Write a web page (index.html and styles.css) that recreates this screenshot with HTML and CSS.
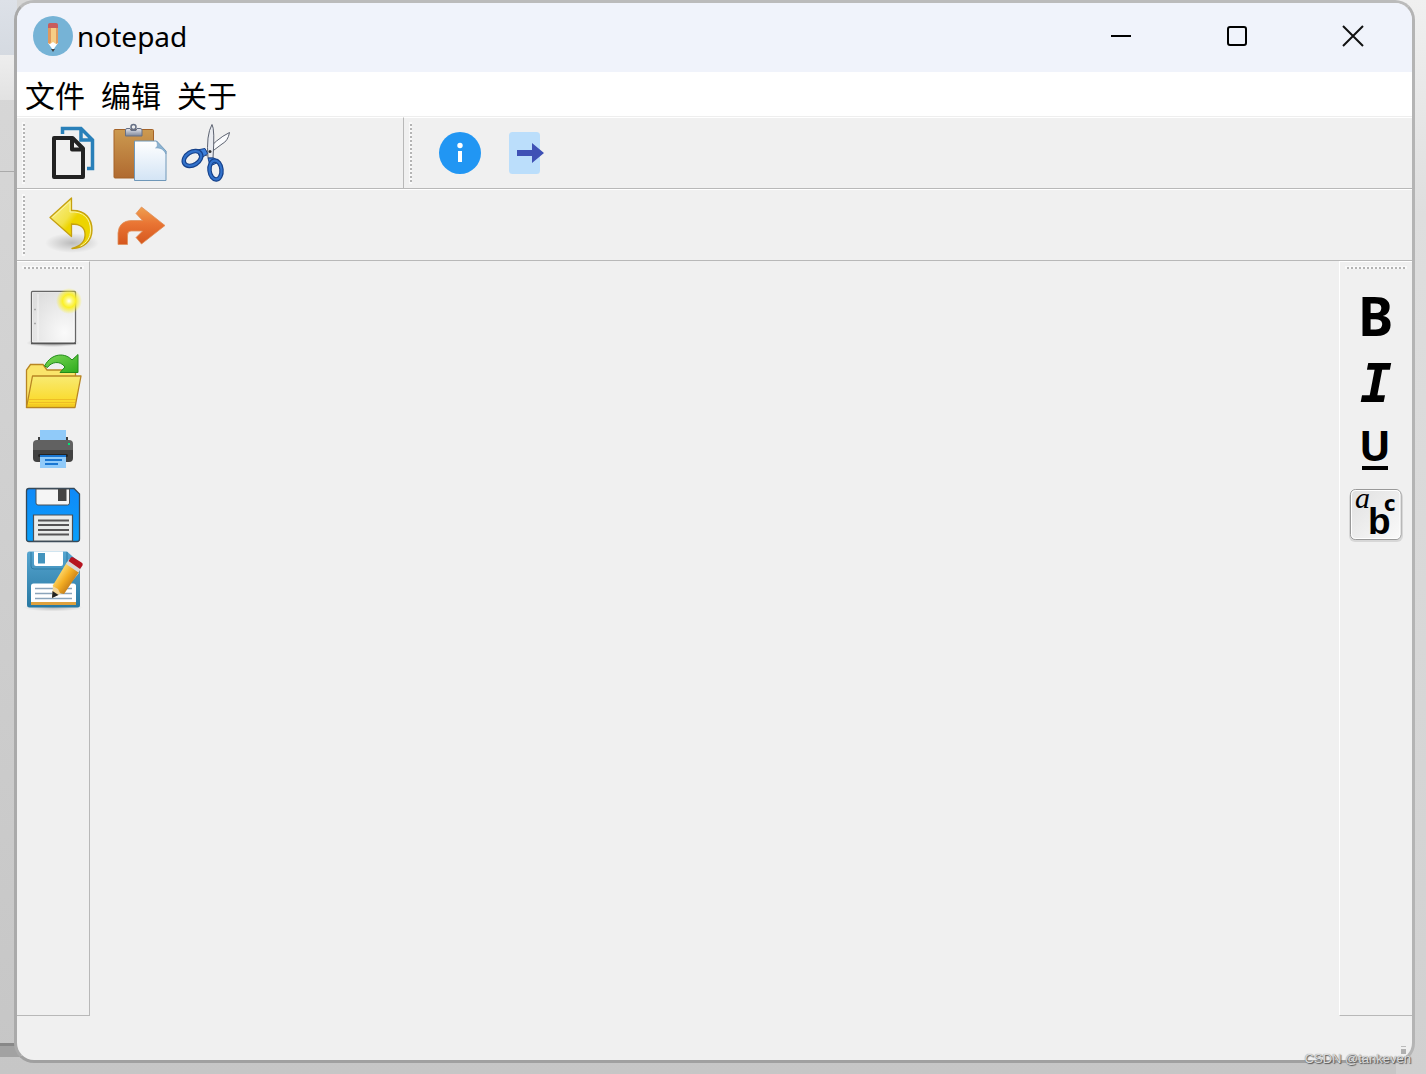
FILE: index.html
```html
<!DOCTYPE html>
<html lang="zh-CN">
<head>
    <meta charset="UTF-8">
    <meta name="viewport" content="width=device-width, initial-scale=1.0">
    <title>notepad</title>
    <link rel="stylesheet" href="styles.css">
</head>
<body>
    <div class="window">
        <header class="titlebar">
            <svg class="app-icon" viewBox="0 0 40 40">
                <circle cx="20" cy="20" r="20" fill="#76b3d6"/>
                <path d="M15 12h10v15l-5 7-5-7z" fill="#fff"/>
                <path d="M15 12h10v15l-2 1-3-2-3 2-2-1z" fill="#f6cd86"/>
                <path d="M15 12h3v14l-1 2-2-1zM23 12h2v15l-2 1z" fill="#e0995d"/>
                <path d="M15 9q0-2 2-2h6q2 0 2 2v3H15z" fill="#c85c5c"/>
                <path d="M18 33h4l-2 3z" fill="#444"/>
            </svg>
            <h1>notepad</h1>
            <div class="window-buttons">
                <button aria-label="Minimize"><svg viewBox="0 0 22 22"><path d="M1 11h20" stroke="#000" stroke-width="2"/></svg></button>
                <button aria-label="Maximize"><svg viewBox="0 0 22 22"><rect x="2" y="2" width="18" height="18" rx="2" fill="none" stroke="#000" stroke-width="2"/></svg></button>
                <button aria-label="Close"><svg viewBox="0 0 22 22"><path d="M1 1l20 20M21 1L1 21" stroke="#111" stroke-width="2"/></svg></button>
            </div>
        </header>

        <nav class="menubar">
            <button>文件</button>
            <button>编辑</button>
            <button>关于</button>
        </nav>

        <div class="toolbar-row">
            <div class="toolbar toolbar-edit">
                <span class="handle"></span>
                <button class="tool" aria-label="Copy">
                    <svg viewBox="0 0 66 66">
                        <path d="M22.500 14V8.500H41L52.500 20v28.500H47M41 8v12h12" fill="none" stroke="#2980b9" stroke-width="3.500"/>
                        <path d="M14 18h18.500L43 28.500V57H14zM32 18v11.500h11" fill="none" stroke="#222" stroke-width="4" stroke-linejoin="round"/>
                    </svg>
                </button>
                <button class="tool" aria-label="Paste">
                    <svg viewBox="0 0 66 66">
                        <defs>
                            <linearGradient id="board" x2="0" y2="1"><stop stop-color="#cc9a50"/><stop offset="1" stop-color="#b06a30"/></linearGradient>
                            <linearGradient id="sheet" x2="0" y2="1"><stop stop-color="#fff"/><stop offset="1" stop-color="#d3e4f5"/></linearGradient>
                            <linearGradient id="metal" x2="0" y2="1"><stop stop-color="#e6e8ef"/><stop offset="1" stop-color="#7d8698"/></linearGradient>
                        </defs>
                        <rect x="8" y="9.500" width="39.500" height="48.500" rx="1" fill="url(#board)" stroke="#a56328"/>
                        <circle cx="27.500" cy="7" r="2.500" fill="#eee" stroke="#667085" stroke-width="1.500"/>
                        <path d="M19.500 10q0-1.500 1.500-1.500h3l1 2h5l1-2h3q2 0 2 1.500v6h-16.500z" fill="url(#metal)" stroke="#667085"/>
                        <path d="M28.500 21h22L60 31v29.500H28.500z" fill="url(#sheet)" stroke="#6f97b8"/>
                        <path d="M50.500 21q2 6-1 7 7-1 10.500 6V31z" fill="#8db4d2" stroke="#6f97b8" stroke-width=".5"/>
                    </svg>
                </button>
                <button class="tool" aria-label="Cut">
                    <svg viewBox="0 0 66 66">
                        <path d="M32 34Q44 19 57.500 12.500 56 21 50 24L34 36z" fill="#fafbfd" stroke="#5c6270"/>
                        <path d="M36 38Q34 15 40 4.500 43 9 41 38z" fill="#e9ebf0" stroke="#5c6270"/>
                        <path d="M25 30l8-1.500 2.500 5-7 5.500zM36 38h6l5 4-9 4z" fill="#3d80dc" stroke="#16418a"/>
                        <g fill="none" stroke="#16418a" stroke-width="4.500">
                            <ellipse cx="20.500" cy="38.500" rx="9.500" ry="6.500" transform="rotate(-32 20.500 38.500)"/>
                            <ellipse cx="43.500" cy="50" rx="6" ry="9.500" transform="rotate(-6 43.500 50)"/>
                        </g>
                        <g fill="none" stroke="#3272cb" stroke-width="2.200">
                            <ellipse cx="20.500" cy="38.500" rx="9.500" ry="6.500" transform="rotate(-32 20.500 38.500)"/>
                            <ellipse cx="43.500" cy="50" rx="6" ry="9.500" transform="rotate(-6 43.500 50)"/>
                        </g>
                        <circle cx="38" cy="31.500" r="1.500" fill="#333"/>
                    </svg>
                </button>
            </div>
            <div class="toolbar toolbar-help">
                <span class="handle"></span>
                <button class="tool" aria-label="About">
                    <svg viewBox="0 0 66 66">
                        <circle cx="33" cy="33" r="21" fill="#2196f3"/>
                        <circle cx="33" cy="25.500" r="2.700" fill="#fff"/>
                        <path d="M31 31h4v11h-4z" fill="#fff"/>
                    </svg>
                </button>
                <button class="tool" aria-label="Exit">
                    <svg viewBox="0 0 66 66">
                        <rect x="16" y="12" width="31" height="42" rx="3.500" fill="#bbdefb"/>
                        <path d="M24 30h15v-7l12 10-12 10v-7H24z" fill="#3f51b5"/>
                    </svg>
                </button>
            </div>
        </div>

        <div class="toolbar-row">
            <div class="toolbar toolbar-history">
                <span class="handle"></span>
                <button class="tool" aria-label="Undo">
                    <svg viewBox="0 0 66 66">
                        <defs>
                            <radialGradient id="shade"><stop stop-color="#000" stop-opacity=".22"/><stop offset="1" stop-color="#000" stop-opacity="0"/></radialGradient>
                            <linearGradient id="yellow" x2="1" y2="1"><stop stop-color="#fbf3a0"/><stop offset=".4" stop-color="#f2e248"/><stop offset=".5" stop-color="#edd400"/></linearGradient>
                        </defs>
                        <ellipse cx="32" cy="51" rx="27" ry="10" fill="url(#shade)"/>
                        <path d="M10 25.500L31.500 6v12.500C46 18 52 27 52 38c0 11-8 18-20 18.500C41 54 45.500 50 45 42c0-7-6-10-13.500-10v12.500z" fill="url(#yellow)" stroke="#c5a010" stroke-width="1.300" stroke-linejoin="round"/>
                        <path d="M12.500 25.500L30 9.500V20c14-1 20.500 7 20.500 18 0 8-4 13-10 16" fill="none" stroke="#fbf4a6" stroke-width="1"/>
                    </svg>
                </button>
                <button class="tool" aria-label="Redo">
                    <svg viewBox="0 0 66 66">
                        <defs><linearGradient id="orange" x2="0" y2="1"><stop stop-color="#efa050"/><stop offset=".45" stop-color="#e97433"/><stop offset="1" stop-color="#d5571e"/></linearGradient></defs>
                        <path d="M12 52.500V41q1-12 13-12.500h11.500L30 21.500l5.500-6.500L59 33.500 35.500 52 30 45.500l6.500-6.500H25q-3.500 0-3.500 4v9.500z" fill="url(#orange)" stroke="#e0905c" stroke-width=".8"/>
                    </svg>
                </button>
            </div>
        </div>

        <main class="workspace">
            <div class="side side-left">
                <span class="handle handle-top"></span>
                <button class="tool" aria-label="New">
                    <svg viewBox="0 0 66 66">
                        <defs>
                            <radialGradient id="page" cx=".75" cy=".8" r=".9"><stop stop-color="#fafafa"/><stop offset="1" stop-color="#dedede"/></radialGradient>
                            <radialGradient id="sun"><stop stop-color="#fff"/><stop offset=".25" stop-color="#fdf87a"/><stop offset=".5" stop-color="#fbf02a"/><stop offset="1" stop-color="#fbf02a" stop-opacity="0"/></radialGradient>
                        </defs>
                        <ellipse cx="33" cy="59" rx="27" ry="4" fill="url(#shade)"/>
                        <ellipse cx="33" cy="59" rx="27" ry="4" fill="url(#shade)"/>
                        <rect x="11.500" y="7.500" width="44" height="51.500" rx="1" fill="url(#page)" stroke="#666" stroke-width="1.300"/>
                        <path d="M11 59.500h45" stroke="#555" stroke-width="1.500"/>
                        <path d="M12.500 58V8.500H54V58z M18 10v47" fill="none" stroke="#fff" stroke-opacity=".6"/>
                        <path d="M14 25.500h2M14 39.500h2" stroke="#aaa" stroke-width="1.500"/>
                        <circle cx="49" cy="17" r="13" fill="url(#sun)"/>
                    </svg>
                </button>
                <button class="tool" aria-label="Open">
                    <svg viewBox="0 0 66 66">
                        <defs>
                            <linearGradient id="folder" x2="0" y2="1"><stop stop-color="#f8ea72"/><stop offset="1" stop-color="#fbd71c"/></linearGradient>
                            <linearGradient id="green" x2="1" y2="1"><stop stop-color="#7ed957"/><stop offset="1" stop-color="#2eab1d"/></linearGradient>
                        </defs>
                        <path d="M6.500 57V20l4-5.500H23l4 5.500h28.500v12L52 57z" fill="#fae46a" stroke="#b88523" stroke-width="1.300"/>
                        <path d="M12.500 26H61l-6 31.500H6.500z" fill="url(#folder)" stroke="#b88523" stroke-width="1.300" stroke-linejoin="round"/>
                        <path d="M9 49.500h47M9 52.500h46M8 55h46.500" stroke="#eebd25"/>
                        <path d="M24.500 16C32 2 46 3 52 10l6-5.500v18H40l5-5.500c-5-7-14-5-17.500.500z" fill="url(#green)" stroke="#218a19"/>
                    </svg>
                </button>
                <button class="tool" aria-label="Print">
                    <svg viewBox="0 0 66 66">
                        <path d="M18 21h30v5H18z" fill="#424242"/>
                        <path d="M20 14h26v12H20z" fill="#90caf9"/>
                        <path d="M13 33h40v9q0 4-4 4H17q-4 0-4-4z" fill="#424242"/>
                        <path d="M17 24h32q4 0 4 4v6H13v-6q0-4 4-4z" fill="#616161"/>
                        <rect x="18" y="38" width="30" height="3" rx="1.500" fill="#242424"/>
                        <path d="M20 39h26v13H20z" fill="#90caf9"/>
                        <path d="M20 39h26v2H20zM25 43h17v2H25zM25 47h13v2H25z" fill="#1976d2"/>
                        <path d="M48 27h2v2h-2z" fill="#00e676"/>
                    </svg>
                </button>
                <button class="tool" aria-label="Save">
                    <svg viewBox="0 0 66 66">
                        <defs><linearGradient id="disk" x2="0" y2="1"><stop stop-color="#1089f8"/><stop offset="1" stop-color="#08a0fb"/></linearGradient></defs>
                        <path d="M9 6.500h45l5.500 5.500v45q0 2.500-2.500 2.500H9q-2.500 0-2.500-2.500V9q0-2.500 2.500-2.500z" fill="url(#disk)" stroke="#34495a" stroke-width="1.300"/>
                        <path d="M16 7h33.500v14q0 2-2 2H18q-2 0-2-2z" fill="#f5f5f5" stroke="#4a5056"/>
                        <path d="M38 7h8.500v12H38z" fill="#444"/>
                        <path d="M13.500 59V33h39v26z" fill="#e9ecea" stroke="#4a5056" stroke-width="1.200"/>
                        <path d="M18 38.500h31M18 43h31M18 48h31M18 52.500h31" stroke="#555" stroke-width="1.800"/>
                    </svg>
                </button>
                <button class="tool" aria-label="Save as">
                    <svg viewBox="0 0 66 66">
                        <defs>
                            <linearGradient id="teal" x2="0" y2="1"><stop stop-color="#56a5d0"/><stop offset="1" stop-color="#2878a2"/></linearGradient>
                            <linearGradient id="pencil" gradientUnits="userSpaceOnUse" x1="38" y1="28" x2="50" y2="37"><stop stop-color="#fbd263"/><stop offset=".5" stop-color="#f3ad22"/><stop offset="1" stop-color="#cd851a"/></linearGradient>
                        </defs>
                        <ellipse cx="33" cy="59.500" rx="30" ry="4" fill="url(#shade)"/>
                        <path d="M9 3.500h38L60 15v42q0 2.500-2.500 2.500h-48Q7 59.500 7 57V6q0-2.500 2-2.500z" fill="url(#teal)"/>
                        <path d="M11 4v14q0 3 3 3h29q4 0 4-3V4" fill="none" stroke="#2d7ca5"/>
                        <path d="M14 3.500h29V16q0 2-2 2H16q-2 0-2-2z" fill="#fff"/>
                        <path d="M18 5h7v10.500h-7z" fill="#4394bd"/>
                        <path d="M11 57V38q0-2.500 2.500-2.500h40Q56 35.500 56 38v19z" fill="#fff"/>
                        <path d="M11 54h45v3H11z" fill="#dfa13d"/>
                        <path d="M15 40.500h37M15 45.500h37M15 50.500h37" stroke="#8ba4ba" stroke-width="1.500"/>
                        <path d="M32 50l1-12 15-20 11 7-17 20z" fill="#f3d494"/>
                        <path d="M32.500 38L47 14l12.500 9L44 46l-4-1-2-4z" fill="url(#pencil)"/>
                        <path d="M32 50l.5-7 6 4z" fill="#222"/>
                        <path d="M46 16l3-5 12.500 8.500-3 5z" fill="#d8d8d8"/>
                        <path d="M48.500 13l2-3q1-1.500 3-.5l8 5q2 1 1 3L60 21z" fill="#b51420"/>
                    </svg>
                </button>
            </div>

            <div class="canvas"></div>

            <div class="side side-right">
                <span class="handle handle-top"></span>
                <button class="tool" aria-label="Bold"><svg viewBox="0 0 66 66"><text class="letter" x="15" y="52">B</text></svg></button>
                <button class="tool" aria-label="Italic"><svg viewBox="0 0 66 66"><text class="letter letter-italic" x="17" y="52">I</text></svg></button>
                <button class="tool" aria-label="Underline">
                    <svg viewBox="0 0 66 66">
                        <text class="letter letter-underline" x="16" y="45">U</text>
                        <path d="M19 50h26v4H19z"/>
                    </svg>
                </button>
                <button class="tool" aria-label="Font">
                    <svg viewBox="0 0 66 66">
                        <defs><linearGradient id="key" x2="1" y2="1"><stop stop-color="#e0e0e0"/><stop offset="1" stop-color="#fafafa"/></linearGradient></defs>
                        <rect x="6" y="9" width="54" height="51" rx="6" fill="#000" opacity=".1"/>
                        <rect x="7.500" y="7.500" width="50.500" height="50" rx="5" fill="url(#key)" stroke="#999"/>
                        <rect x="8.500" y="8.500" width="48.500" height="48" rx="4" fill="none" stroke="#fff"/>
                        <text class="font-a" x="12" y="26">a</text>
                        <text class="font-b" x="25" y="52">b</text>
                        <text class="font-c" x="41" y="29">c</text>
                    </svg>
                </button>
            </div>
        </main>

        <footer class="statusbar">
            <span class="grip"></span>
        </footer>
    </div>
    <div class="watermark">CSDN @tankeven</div>
</body>
</html>
```
FILE: styles.css
```css
* {
    margin: 0;
    padding: 0;
    box-sizing: border-box;
}

body {
    position: relative;
    min-height: 100vh;
    display: flex;
    padding: 0 11px 11px 14px;
    font-family: "Noto Sans", "Noto Sans CJK SC", sans-serif;
    color: #000;
    /* desktop behind the window */
    background:
        linear-gradient(#dde1e8, #d5dae1) 0 0 / 17px 55px no-repeat,
        linear-gradient(#eee, #e2e2e2) 0 55px / 17px 45px no-repeat,
        linear-gradient(#aaa, #aaa) 0 171px / 17px 1px no-repeat,
        linear-gradient(#888, #888) 0 calc(100% - 28px) / 17px 3px no-repeat,
        linear-gradient(#a2a2a2, #a2a2a2) 0 calc(100% - 17px) / 24px 11px no-repeat,
        linear-gradient(#bbb, #bbb) 50px 0 / calc(100% - 100px) 3px no-repeat,
        linear-gradient(#f0f0f0, #dedede 20%, #d0d0d0) 100% 0 / 30px 100% no-repeat,
        linear-gradient(#d8d8d8, #c6c6c6);
}

button {
    border: none;
    background: none;
    font: inherit;
    color: inherit;
}

.window {
    flex: 1;
    display: flex;
    flex-direction: column;
    background: #f0f0f0;
    border: 3px solid #aaa;
    border-top-color: #bbb;
    border-right-color: #b4b4b4;
    border-bottom-color: #a0a0a0;
    border-radius: 20px;
    overflow: hidden;
}

.titlebar {
    display: flex;
    align-items: center;
    height: 69px;
    padding: 0 1px 3px 16px;
    background: #f0f3fb;
}

.titlebar h1 {
    flex: 1;
    margin-left: 4px;
    font-size: 28px;
    font-weight: 400;
    line-height: 40px;
}

.app-icon {
    width: 40px;
    height: 40px;
}

.window-buttons {
    display: flex;
}

.window-buttons button {
    width: 116px;
    height: 66px;
}

.window-buttons svg {
    display: block;
    width: 22px;
    height: 22px;
    margin: 0 auto;
}

.menubar {
    display: flex;
    gap: 16px;
    height: 45px;
    padding: 0 8px;
    background: #fff;
    border-bottom: 1px solid #eee;
}

.menubar button {
    font-family: "Noto Sans CJK SC", sans-serif;
    font-size: 30px;
    line-height: 44px;
}

.toolbar-row {
    display: flex;
}

.toolbar {
    flex: 1;
    display: flex;
    align-items: center;
    height: 72px;
    padding-left: 5px;
    border-top: 1px solid #fff;
    border-bottom: 1px solid #b8b8b8;
}

.toolbar-edit {
    flex: 0 0 387px;
    border-right: 1px solid #b8b8b8;
}

/* row of small raised dots */
.handle {
    width: 3px;
    height: 62px;
    margin-right: 15px;
    background: conic-gradient(at 1px 2px, #f9f9f9 25%, #b4b4b4 0 50%, #f9f9f9 0) 0 0 / 3px 4px;
}

.tool {
    width: 66px;
    height: 66px;
}

.tool svg {
    display: block;
    width: 66px;
    height: 66px;
    overflow: visible;
}

.workspace {
    flex: 1;
    display: flex;
}

.side {
    display: flex;
    flex-direction: column;
    align-items: center;
    width: 73px;
    padding-top: 4px;
    border-top: 1px solid #fff;
    border-bottom: 1px solid #b8b8b8;
}

.side-left {
    border-right: 1px solid #b8b8b8;
}

.side-right {
    border-left: 1px solid #fff;
}

.handle-top {
    width: 62px;
    height: 3px;
    margin: 0 0 15px;
    background: conic-gradient(at 2px 1px, #f9f9f9 25%, #b4b4b4 0 50%, #f9f9f9 0) 0 0 / 4px 3px;
}

.canvas {
    flex: 1;
}

.letter {
    font-family: "Noto Sans", sans-serif;
    font-size: 53px;
    font-weight: 700;
}

.letter-italic {
    font-family: "DejaVu Sans Mono", monospace;
    font-style: italic;
}

.letter-underline {
    font-size: 42px;
}

.font-a {
    font-family: "Liberation Serif", serif;
    font-size: 30px;
    font-style: italic;
}

.font-b {
    font-family: "Liberation Sans", sans-serif;
    font-size: 37px;
    font-weight: 700;
}

.font-c {
    font-family: "Liberation Sans Narrow", "DejaVu Sans Condensed", sans-serif;
    font-size: 22px;
    font-weight: 700;
}

.statusbar {
    display: flex;
    justify-content: flex-end;
    align-items: flex-end;
    height: 44px;
    padding: 0 6px 6px;
}

.grip {
    width: 5px;
    height: 8px;
    border-top: 1px solid #bbb;
    background: linear-gradient(#f0f0f0 0 2px, #b0b0b0 2px);
}

.watermark {
    position: absolute;
    right: 15px;
    bottom: 6px;
    font-family: "Liberation Sans", sans-serif;
    font-size: 13px;
    line-height: 18px;
    color: #ddd;
    text-shadow: 1px 1px 1px #555, 0 0 1px #777;
}
```
